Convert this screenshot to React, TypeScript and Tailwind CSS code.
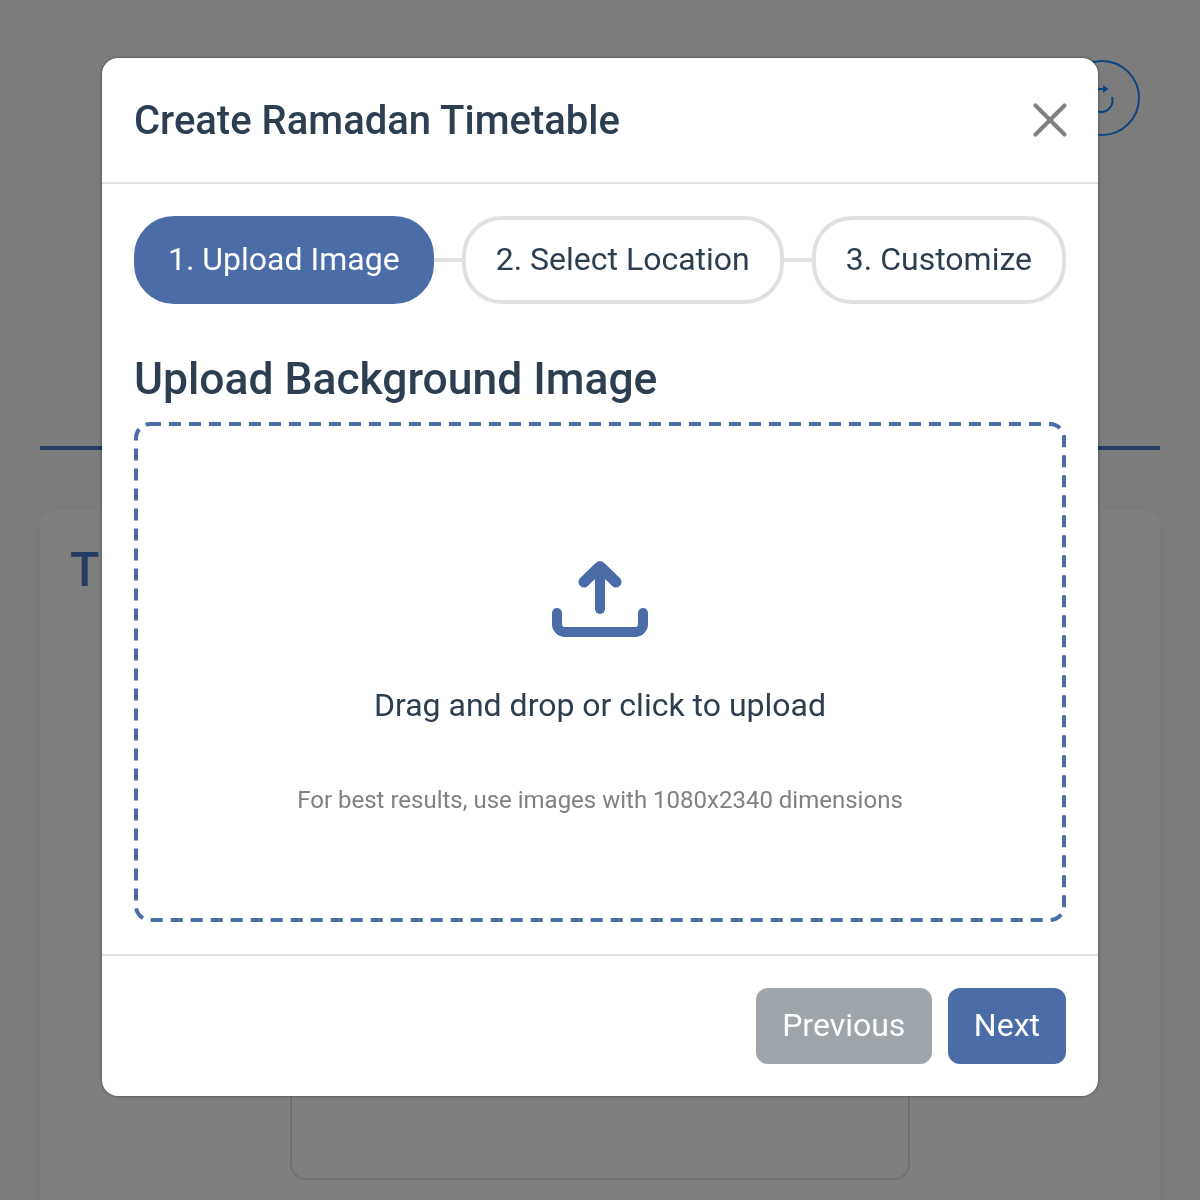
import * as React from "react";
import { X } from "lucide-react";

const steps = ["1. Upload Image", "2. Select Location", "3. Customize"];

const Background = () => (
  <div className="h-[1200px] overflow-hidden bg-[#f8f9fa] px-10 pt-[60px]">
    <div className="flex h-[390px] justify-end border-b-4 border-[#4a76c0] px-5">
      <button className="flex h-[76px] w-[76px] items-center justify-center rounded-full border-2 border-[#1a86ff] text-[#1a86ff]">
        <svg width="32" height="32" viewBox="0 0 32 32" fill="none" stroke="currentColor" strokeWidth="2">
          <path d="M26 15A11.5 11.5 0 1 1 15 7h3" />
          <path d="M17 3l5.5 4-5.5 4z" fill="currentColor" stroke="none" />
        </svg>
      </button>
    </div>
    <div className="mt-[60px] h-[800px] rounded-2xl bg-white pt-8 pl-[30px] shadow-[0_4px_12px_rgba(0,0,0,0.05)]">
      <h2 className="text-[48px] leading-[56px] font-medium text-[#4a76c0]">T</h2>
      <div className="mt-[400px] ml-[220px] h-[182px] w-[620px] rounded-2xl border-2 border-[#e0e0e0]" />
    </div>
  </div>
);

const Stepper = () => (
  <div className="flex items-center">
    {steps.map((step, i) => (
      <React.Fragment key={step}>
        {i > 0 && <div className="h-1 flex-1 bg-[#e0e0e0]" />}
        <div
          className={
            i === 0
              ? "rounded-[40px] border-4 border-[#4a6da7] bg-[#4a6da7] px-[30px] pt-[15px] pb-[17px] text-[32px] leading-[48px] text-white"
              : "rounded-[40px] border-4 border-[#e0e0e0] bg-white px-[30px] pt-[15px] pb-[17px] text-[32px] leading-[48px] text-[#2c3e50]"
          }
        >
          {step}
        </div>
      </React.Fragment>
    ))}
  </div>
);

export default function App() {
  return (
    <div className="relative h-[1200px] overflow-hidden font-['Roboto',sans-serif]">
      <Background />
      <div className="fixed inset-0 flex justify-center bg-black/50 pt-[58px]">
        <div className="h-[1038px] w-[996px] rounded-2xl bg-white shadow-[0_0_3px_rgba(0,0,0,0.5)]">
          <div className="flex h-[126px] items-center justify-between border-b-2 border-[#e0e0e0] pr-8 pl-8">
            <h1 className="pt-[2px] text-[40px] leading-[60px] font-medium text-[#2c3e50]">Create Ramadan Timetable</h1>
            <X className="-mr-[13px] h-[58px] w-[58px] text-[#808080]" strokeWidth={1.7} />
          </div>

          <div className="p-8">
            <Stepper />
            <h2 className="mt-10 mb-2 text-[44.4px] leading-[70px] font-medium text-[#2c3e50]">Upload Background Image</h2>
            <div className="relative flex h-[500px] flex-col items-center pt-[138px]">
              {/* css dashed can't give the 12/8 dash of the reference */}
              <svg className="absolute inset-0" width="932" height="500" fill="none">
                <rect x="2" y="2" width="928" height="496" rx="14" stroke="#4a6da7" strokeWidth="4" strokeDasharray="12 8" strokeDashoffset="1" />
              </svg>
              <svg width="96" height="78" viewBox="0 0 96 78" fill="none" stroke="#4a6da7" strokeWidth="10" strokeLinecap="round" strokeLinejoin="round">
                <path d="M5 53v11a8 8 0 0 0 8 8h70a8 8 0 0 0 8-8v-11" />
                <path d="M32 22L48 6.5l16 15.5" strokeWidth="11" />
                <path d="M48 8v41" />
              </svg>
              <p className="mt-[43px] text-[32px] leading-[48px] text-[#2c3e50]">Drag and drop or click to upload</p>
              <p className="mt-[53px] text-2xl leading-9 text-[#808080]">For best results, use images with 1080x2340 dimensions</p>
            </div>
          </div>

          <div className="flex justify-end gap-4 border-t-2 border-[#e0e0e0] p-8">
            <button className="rounded-xl bg-[#9ea5aa] px-[26.5px] pt-[13px] pb-[15px] text-[32px] leading-[48px] text-white">Previous</button>
            <button className="rounded-xl bg-[#4a6da7] px-[26px] pt-[13px] pb-[15px] text-[32px] leading-[48px] text-white">Next</button>
          </div>
        </div>
      </div>
    </div>
  );
}
